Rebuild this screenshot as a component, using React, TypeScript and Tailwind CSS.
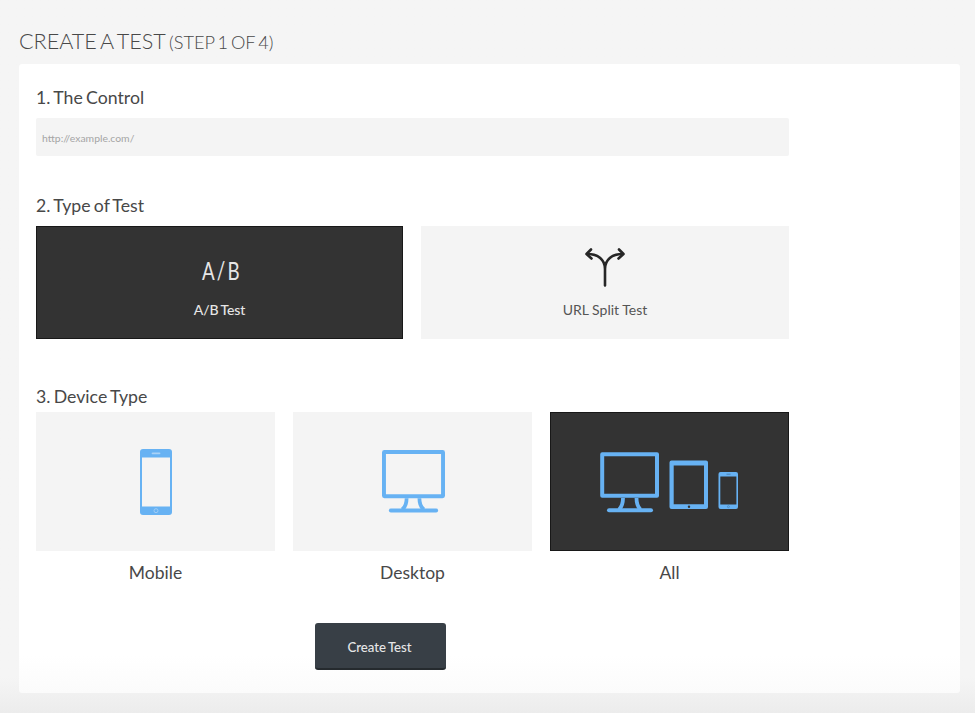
import React from 'react'

const Monitor: React.FC<{ className?: string }> = ({ className }) => (
  <svg className={className} viewBox="0 0 64 64" fill="none" stroke="#67b2f3">
    <rect x="2" y="2" width="60" height="45" rx="0.5" strokeWidth="4" strokeLinejoin="round" />
    <path d="M25 49 C25 55 23.5 58 20.5 60.5 M38 49 C38 55 39.5 58 42.5 60.5" strokeWidth="3.8" />
    <path d="M9 61.5 H55" strokeWidth="4" strokeLinecap="round" />
  </svg>
)

const PhoneIcon = () => (
  <svg className="h-[66px] w-8" viewBox="0 0 32 66" fill="none">
    <rect width="32" height="66" rx="3" fill="#67b2f3" />
    <rect x="2" y="8.5" width="28" height="49" fill="#f4f4f4" />
    <path d="M12.5 4.3 H19.5" stroke="#a9d2f7" strokeWidth="1.8" strokeLinecap="round" />
    <circle cx="16" cy="61.7" r="2" stroke="#a0cdf6" strokeWidth="1" />
  </svg>
)

const AllDevicesIcon = () => (
  <svg className="h-[62px] w-[140px]" viewBox="0 0 140 62" fill="none">
    <g stroke="#67b2f3">
      <rect x="2.2" y="3.2" width="54.8" height="41.6" strokeWidth="4" strokeLinejoin="round" />
      <path d="M23 47 C23 53 21.5 56 19 58.5 M36.5 47 C36.5 53 38 56 40.5 58.5" strokeWidth="3.8" />
      <path d="M9 59.3 H51" strokeWidth="4" strokeLinecap="round" />
    </g>
    <path
      fill="#67b2f3"
      fillRule="evenodd"
      d="M71.5 9.5 H106 Q108 9.5 108 11.5 V56 Q108 58 106 58 H71.5 Q69.5 58 69.5 56 V11.5 Q69.5 9.5 71.5 9.5 Z M73.7 14.5 V53.3 H104 V14.5 Z"
    />
    <circle cx="89" cy="55.7" r="1.2" fill="#333" />
    <path
      fill="#67b2f3"
      fillRule="evenodd"
      d="M120.5 21 H136 Q138 21 138 23 V56 Q138 58 136 58 H120.5 Q118.5 58 118.5 56 V23 Q118.5 21 120.5 21 Z M120.3 25.5 V53.5 H136.4 V25.5 Z"
    />
    <path d="M126.5 23.2 H130.5" stroke="#4c82b1" strokeWidth="1" />
    <circle cx="128.4" cy="55.7" r="1" stroke="#4c82b1" strokeWidth="0.7" />
  </svg>
)

const SplitIcon = () => (
  <svg
    className="h-10 w-10"
    viewBox="0 0 40 40"
    fill="none"
    stroke="#262626"
    strokeWidth="2.6"
    strokeLinecap="round"
    strokeLinejoin="round"
  >
    <path d="M20 38.5 V22 C20 12.5 13 7 2.5 7 M20 22 C20 12.5 27 7 37.5 7" />
    <path d="M6 2.5 L1.5 7 L6.5 11.5 M34 2.5 L38.5 7 L33.5 11.5" />
  </svg>
)

const Heading: React.FC<{ children: React.ReactNode }> = ({ children }) => (
  <h2 className="h-6 text-[17.7px] leading-6 text-[#484848] [word-spacing:-1.2px]">{children}</h2>
)

const App: React.FC = () => {
  return (
    <div className="h-[713px] bg-[#f5f5f5] bg-linear-to-b from-[#f5f5f5] from-95% to-[#ececec] pr-[15px] pl-[19px] font-['Lato',sans-serif]">
      <h1 className="h-16 pt-[25px] text-[21.6px] leading-8 font-light text-[#484848] [word-spacing:-2px]">
        CREATE A TEST <span className="text-[18.2px]">(STEP 1 OF 4)</span>
      </h1>

      <main className="h-[629px] rounded-[3px] bg-white bg-linear-to-b from-white from-94% to-[#fbfbfb] pt-[22px] pl-[17px]">
        <div className="w-[753px]">
          <Heading>1. The Control</Heading>
          <input
            className="mt-2 block h-[38px] w-full rounded-[2px] bg-[#f4f4f4] px-[6px] pt-px text-[10.4px] text-[#555] placeholder:text-[#a5a5a5]"
            placeholder="http://example.com/"
          />

          <div className="mt-[38px]">
            <Heading>2. Type of Test</Heading>
          </div>
          <div className="mt-2 grid grid-cols-[367px_368px] gap-[18px]">
            <button className="flex h-[113px] flex-col items-center border border-[#181818] bg-[#333] pt-[27px] text-[#e6e6e6]">
              <span className="h-8 scale-x-75 pl-[6px] text-[25px] leading-8 tracking-[3px]">A/B</span>
              <span className="mt-[14px] text-sm leading-5 font-medium tracking-[-0.1px] [word-spacing:-1px]">
                A/B Test
              </span>
            </button>
            <button className="flex h-[113px] flex-col items-center bg-[#f4f4f4] pt-[21px] text-[#555]">
              <SplitIcon />
              <span className="mt-[13px] text-sm leading-5">URL Split Test</span>
            </button>
          </div>

          <div className="mt-[46px]">
            <Heading>3. Device Type</Heading>
          </div>
          <div className="mt-[3px] grid grid-cols-3 gap-[18px] text-center text-[17.5px] leading-6 text-[#484848]">
            <div>
              <button className="flex h-[139px] w-full items-center justify-center bg-[#f4f4f4]">
                <PhoneIcon />
              </button>
              <p className="mt-[10px]">Mobile</p>
            </div>
            <div>
              <button className="flex h-[139px] w-full items-center justify-center bg-[#f4f4f4] pl-px">
                <Monitor className="h-[63px] w-[63px]" />
              </button>
              <p className="mt-[10px]">Desktop</p>
            </div>
            <div>
              <button className="flex h-[139px] w-full items-center justify-center border border-[#181818] bg-[#333]">
                <AllDevicesIcon />
              </button>
              <p className="mt-[10px]">All</p>
            </div>
          </div>

          <button className="mt-[38px] ml-[279px] block h-[47px] w-[131px] rounded-[3px] border-b-2 border-[#252a2e] bg-[#383f46] pt-[4px] pr-[2px] text-[13.2px] font-medium text-[#e6e6e6] [word-spacing:-1px]">
            Create Test
          </button>
        </div>
      </main>
    </div>
  )
}

export default App
